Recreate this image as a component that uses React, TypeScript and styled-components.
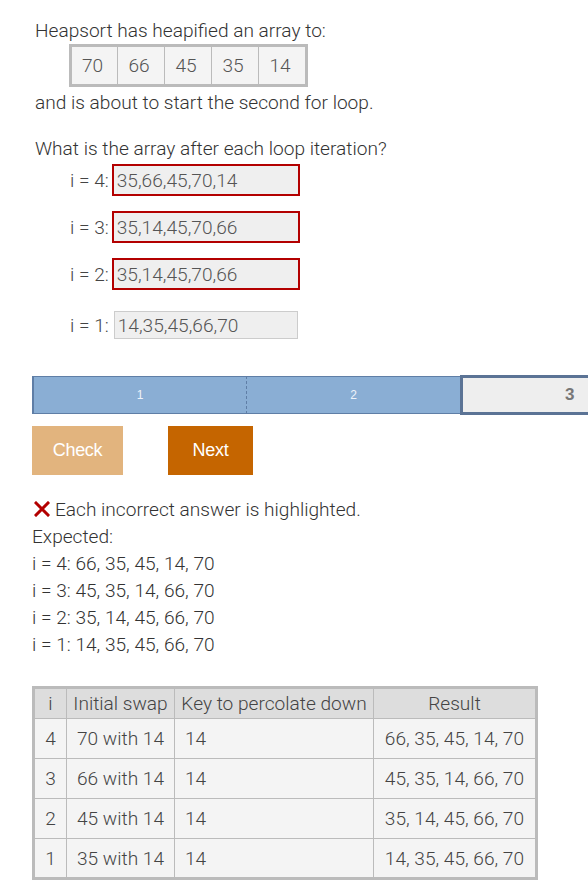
import React from 'react';
import styled, {createGlobalStyle} from 'styled-components';

const GlobalStyle = createGlobalStyle`
  html, body {
    margin: 0;
    padding: 0;
    background: #fff;
    overflow-x: hidden;
  }
  body {
    font-family: Roboto, 'Noto Sans', sans-serif;
    font-weight: 300;
    font-size: 19.1px;
    color: #333;
  }
`;

const Page = styled.div`
  padding: 17px 0 0 32px;
  width: 556px;
`;

const Question = styled.div`
  padding-left: 3px;
`;

const Line = styled.div`
  line-height: 27px;
`;

const ArrayBox = styled.div`
  display: inline-flex;
  margin: 0 0 2px 34px;
  border: 3px solid #bbb;
  background: #f4f4f4;
`;

const ArrayCell = styled.div`
  box-sizing: border-box;
  width: 47px;
  height: 37px;
  line-height: 37px;
  padding-right: 4px;
  text-align: center;
  color: #555;
  border-left: 1px solid #bbb;
  &:first-child {
    border-left: none;
    width: 45px;
  }
`;

const Spacer = styled.div<{h: number}>`
  height: ${p => p.h}px;
`;

const AnswerList = styled.div`
  display: flex;
  flex-direction: column;
  gap: 15px;
  padding-left: 35px;
  margin-top: 2px;
`;

const AnswerRow = styled.div<{$wrong?: boolean}>`
  display: flex;
  align-items: center;
  gap: 3px;
  margin-top: ${p => (p.$wrong ? 0 : 6)}px;
`;

const Label = styled.span`
  color: #444;
  white-space: nowrap;
`;

const AnswerInput = styled.input<{$wrong?: boolean}>`
  box-sizing: border-box;
  font-family: Roboto, 'Noto Sans', sans-serif;
  font-weight: 300;
  font-size: 19.1px;
  color: #555;
  background: #efefef;
  width: ${p => (p.$wrong ? 188 : 184)}px;
  height: ${p => (p.$wrong ? 32 : 28)}px;
  padding: 0 0 0 3px;
  margin-left: ${p => (p.$wrong ? 0 : 2)}px;
  border: ${p => (p.$wrong ? '2px solid #b30000' : '1px solid #ccc')};
  outline: none;
`;

const Progress = styled.div`
  display: flex;
  width: 650px;
  height: 38px;
  margin-top: 37px;
`;

const Segment = styled.div<{$dashed?: boolean}>`
  box-sizing: border-box;
  flex: 0 0 214px;
  display: flex;
  align-items: center;
  justify-content: center;
  font-family: 'Liberation Sans', Arial, sans-serif;
  font-size: 12px;
  color: #eef3fa;
  background: #8aaed4;
  border-top: 1px solid #5f7ea6;
  border-bottom: 1px solid #5f7ea6;
  border-left: ${p => (p.$dashed ? '1px dashed #5f7ea6' : '2px solid #5f7ea6')};
`;

const CurrentSegment = styled.div`
  box-sizing: border-box;
  flex: 0 0 220px;
  height: 40px;
  margin-top: -1px;
  display: flex;
  align-items: center;
  padding-left: 102px;
  background: #eee;
  border: 3px solid #5b7395;
  font-family: 'Liberation Sans', Arial, sans-serif;
  font-weight: 700;
  font-size: 17px;
  color: #777;
`;

const Buttons = styled.div`
  display: flex;
  gap: 45px;
  margin-top: 12px;
`;

const Button = styled.button<{$bg: string; $w: number}>`
  width: ${p => p.$w}px;
  height: 49px;
  border: none;
  background: ${p => p.$bg};
  color: #fff;
  font-family: 'Liberation Sans', Arial, sans-serif;
  font-size: 18px;
  letter-spacing: -0.3px;
  padding: 0;
`;

const Feedback = styled.div`
  margin-top: 21px;
  line-height: 27px;
`;

const Cross = styled.svg`
  width: 16px;
  height: 16px;
  margin: 0 5px 0 2px;
  vertical-align: -1px;
`;

const Table = styled.table`
  margin-top: 28px;
  width: 503px;
  table-layout: fixed;
  border-collapse: collapse;
  border: 3px solid #bbb;
  color: #444;
`;

const Th = styled.th<{$w: number}>`
  width: ${p => p.$w}px;
  height: 31px;
  padding: 0;
  background: #ddd;
  border: 1px solid #bbb;
  font-weight: 300;
  white-space: nowrap;
  box-sizing: border-box;
`;

const Td = styled.td<{$align: 'left' | 'center' | 'right'}>`
  height: 40px;
  padding: 0 11px 0 10px;
  background: #f4f4f4;
  border: 1px solid #bbb;
  text-align: ${p => p.$align};
  white-space: nowrap;
  box-sizing: border-box;
  &:first-child {
    padding: 0;
  }
`;

const answers = [
  {i: 4, value: '35,66,45,70,14', wrong: true},
  {i: 3, value: '35,14,45,70,66', wrong: true},
  {i: 2, value: '35,14,45,70,66', wrong: true},
  {i: 1, value: '14,35,45,66,70', wrong: false},
];

const expected = [
  {i: 4, swap: '70 with 14', result: '66, 35, 45, 14, 70'},
  {i: 3, swap: '66 with 14', result: '45, 35, 14, 66, 70'},
  {i: 2, swap: '45 with 14', result: '35, 14, 45, 66, 70'},
  {i: 1, swap: '35 with 14', result: '14, 35, 45, 66, 70'},
];

const App = () => {
  return (
    <>
      <GlobalStyle/>
      <Page>
        <Question>
          <Line>Heapsort has heapified an array to:</Line>
          <ArrayBox>
            {[70, 66, 45, 35, 14].map(n => (
              <ArrayCell key={n}>{n}</ArrayCell>
            ))}
          </ArrayBox>
          <Line>and is about to start the second for loop.</Line>
          <Spacer h={19}/>
          <Line>What is the array after each loop iteration?</Line>
          <AnswerList>
            {answers.map(a => (
              <AnswerRow key={a.i} $wrong={a.wrong}>
                <Label>i = {a.i}:</Label>
                <AnswerInput $wrong={a.wrong} defaultValue={a.value}/>
              </AnswerRow>
            ))}
          </AnswerList>
        </Question>

        <Progress>
          <Segment>1</Segment>
          <Segment $dashed>2</Segment>
          <CurrentSegment>3</CurrentSegment>
        </Progress>

        <Buttons>
          <Button $bg="#e2b47e" $w={91}>Check</Button>
          <Button $bg="#c56500" $w={85}>Next</Button>
        </Buttons>

        <Feedback>
          <div>
            <Cross viewBox="0 0 16 16">
              <path d="M2 2 L14 14 M14 2 L2 14" stroke="#b30000" strokeWidth="3" strokeLinecap="square"/>
            </Cross>
            Each incorrect answer is highlighted.
          </div>
          <div>Expected:</div>
          {expected.map(e => (
            <div key={e.i}>i = {e.i}: {e.result}</div>
          ))}
        </Feedback>

        <Table>
          <thead>
            <tr>
              <Th $w={33}>i</Th>
              <Th $w={108}>Initial swap</Th>
              <Th $w={199}>Key to percolate down</Th>
              <Th $w={163}>Result</Th>
            </tr>
          </thead>
          <tbody>
            {expected.map(e => (
              <tr key={e.i}>
                <Td $align="center">{e.i}</Td>
                <Td $align="left">{e.swap}</Td>
                <Td $align="left">14</Td>
                <Td $align="right">{e.result}</Td>
              </tr>
            ))}
          </tbody>
        </Table>
      </Page>
    </>
  );
};

export default App;
